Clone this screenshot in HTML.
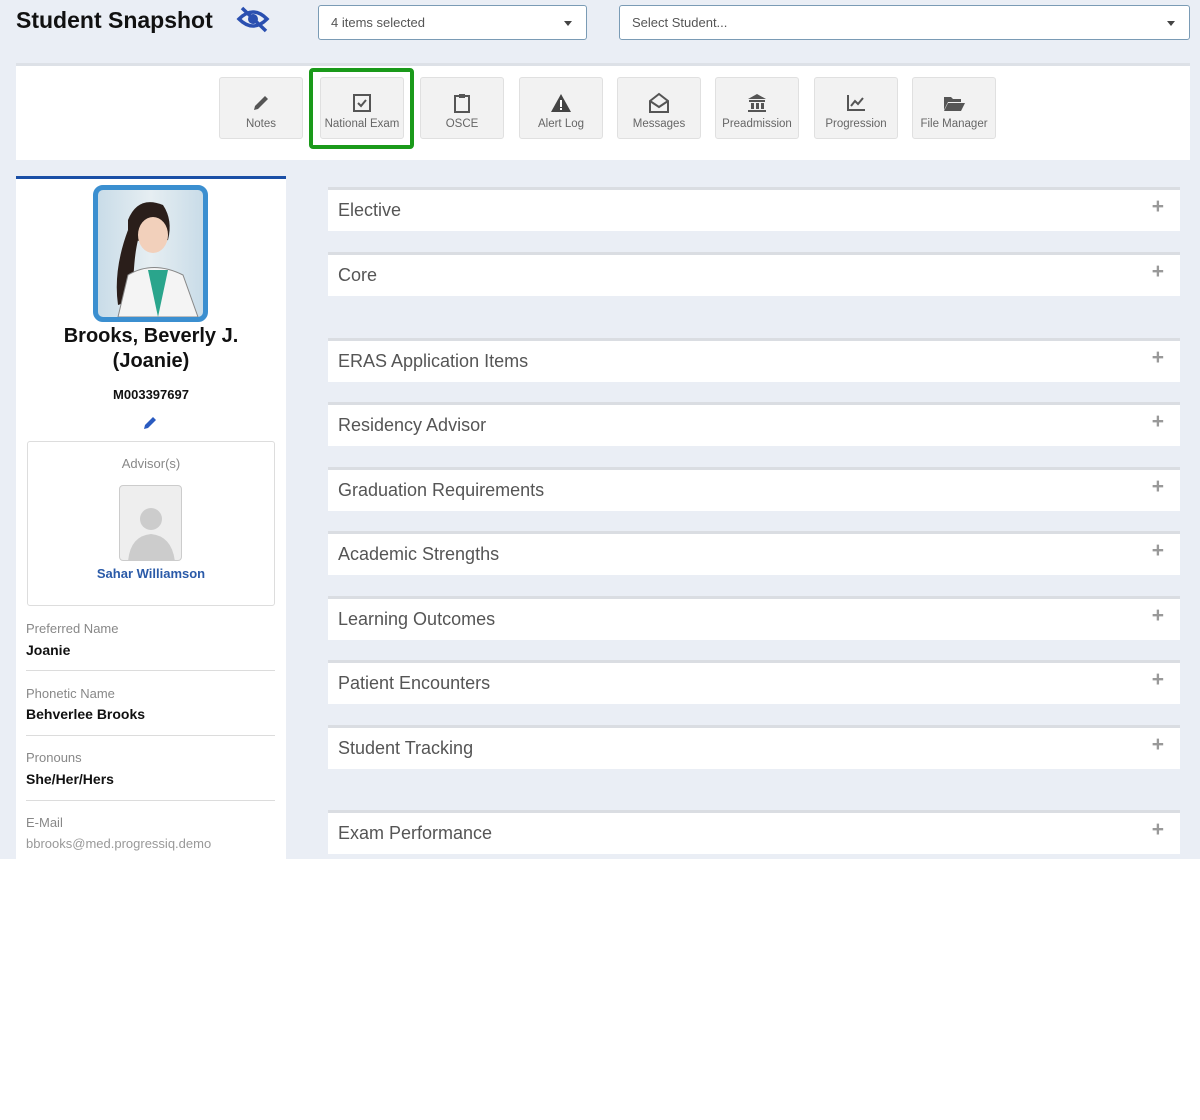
<!DOCTYPE html>
<html><head><style>
*{box-sizing:border-box;margin:0;padding:0}
body{width:1200px;height:1120px;background:#fff;font-family:"Liberation Sans",sans-serif;position:relative;overflow:hidden}
.bg{position:absolute;left:0;top:0;width:1200px;height:859px;background:#eaeef5}
.abs{position:absolute}
h1{position:absolute;left:16px;top:7px;font-size:23px;font-weight:bold;color:#111}
.sel{position:absolute;top:5px;height:35px;background:#fff;border:1px solid #7a9bb5;border-radius:3px;font-size:13px;color:#555;padding:9px 12px}
.sel:after{content:"";position:absolute;right:14px;top:15px;border:4px solid transparent;border-top:5px solid #444}
.bar{position:absolute;left:16px;top:63px;width:1174px;height:97px;background:#fff;border-top:3px solid #dde1e7}
.btn{position:absolute;top:77px;width:84px;height:62px;background:#f2f2f2;border:1px solid #e0e0e0;border-radius:3px;font-size:11.5px;color:#666;text-align:center}
.btn svg{position:absolute;left:50%;top:14px;margin-left:-11px}
.btn span{position:absolute;left:0;right:0;top:40px}
.green{position:absolute;left:309px;top:68px;width:105px;height:81px;border:4px solid #1a9a1a;border-radius:4px}
.card{position:absolute;left:16px;top:176px;width:270px;height:683px;background:#fff;border-top:3px solid #1a4fa6}
.acc{position:absolute;left:328px;width:852px;height:44px;background:#fff;border-top:3px solid #dadde2;font-size:18px;color:#555;padding:10px 10px}
.acc:after{content:"+";position:absolute;right:16px;top:5px;font-size:21px;font-weight:bold;color:#999}
.lbl{position:absolute;left:26px;font-size:13px;color:#888}
.val{position:absolute;left:26px;font-size:14px;font-weight:bold;color:#111}
.hr{position:absolute;left:26px;width:249px;height:1px;background:#dcdcdc}
</style></head><body>
<div class="bg"></div>
<h1>Student Snapshot</h1>
<svg class="abs" style="left:236px;top:5px" width="34" height="28" viewBox="0 0 34 28"><path d="M3 14 Q17 0 31 14 Q17 28 3 14Z" fill="none" stroke="#2a4fb0" stroke-width="3.5"/><circle cx="17" cy="14" r="5" fill="#2a4fb0"/><line x1="6" y1="3" x2="30" y2="26" stroke="#2a4fb0" stroke-width="3.5"/></svg>
<div class="sel" style="left:318px;width:269px">4 items selected</div>
<div class="sel" style="left:619px;width:571px">Select Student...</div>
<div class="bar"></div>
<div class="btn" style="left:219px"><svg width="22" height="22" viewBox="0 0 22 22"><path d="M4 18 L5 14 L15 4 L18 7 L8 17Z" fill="#555"/></svg><span>Notes</span></div>
<div class="btn" style="left:320px"><svg width="22" height="22" viewBox="0 0 22 22"><rect x="3" y="3" width="16" height="16" fill="none" stroke="#555" stroke-width="2"/><path d="M7 11 L10 14 L15 8" fill="none" stroke="#555" stroke-width="2"/></svg><span>National Exam</span></div>
<div class="btn" style="left:420px"><svg width="22" height="22" viewBox="0 0 22 22"><rect x="4" y="4" width="14" height="16" fill="none" stroke="#555" stroke-width="2"/><rect x="8" y="2" width="6" height="4" fill="#555"/></svg><span>OSCE</span></div>
<div class="btn" style="left:519px"><svg width="22" height="22" viewBox="0 0 22 22"><path d="M11 2 L21 20 L1 20Z" fill="#444"/><rect x="10" y="8" width="2" height="7" fill="#fff"/><rect x="10" y="16" width="2" height="2" fill="#fff"/></svg><span>Alert Log</span></div>
<div class="btn" style="left:617px"><svg width="22" height="22" viewBox="0 0 22 22"><path d="M2 9 L11 2 L20 9 L20 20 L2 20Z M2 9 L11 15 L20 9" fill="none" stroke="#555" stroke-width="2"/></svg><span>Messages</span></div>
<div class="btn" style="left:715px"><svg width="22" height="22" viewBox="0 0 22 22"><path d="M2 7 L11 2 L20 7Z M3 8h16v2H3z M5 11h3v6H5z M10 11h3v6h-3z M15 11h3v6h-3z M2 18h18v2H2z" fill="#555"/></svg><span>Preadmission</span></div>
<div class="btn" style="left:814px"><svg width="22" height="22" viewBox="0 0 22 22"><path d="M3 3 V18 H20" fill="none" stroke="#555" stroke-width="2"/><path d="M6 14 L10 9 L13 12 L18 6" fill="none" stroke="#555" stroke-width="2"/></svg><span>Progression</span></div>
<div class="btn" style="left:912px"><svg width="22" height="22" viewBox="0 0 22 22"><path d="M1 5 h7 l2 2 h8 v3 H5 L1 18Z M5 11 H22 L18 19 H1Z" fill="#555"/></svg><span>File Manager</span></div>
<div class="green"></div>

<div class="card"></div>
<div class="abs" style="left:93px;top:185px;width:115px;height:137px;border:5px solid #3b8fd0;border-radius:10px;background:linear-gradient(90deg,#c9dce8,#e6eef2,#c9dce8);overflow:hidden">
<svg width="105" height="127" viewBox="0 0 105 127"><path d="M30 30 Q40 5 65 15 Q75 30 70 50 Q40 60 30 40Z" fill="#2a1e1a"/><ellipse cx="55" cy="45" rx="15" ry="18" fill="#f2d0bb"/><path d="M30 40 Q15 80 20 115 L35 110 Q35 70 40 50Z" fill="#2a1e1a"/><path d="M20 127 L30 85 Q55 70 85 85 L100 127Z" fill="#f4f4f4" stroke="#888"/><path d="M50 80 L60 127 L70 80Z" fill="#2aa58c"/></svg></div>
<div class="abs" style="left:16px;width:270px;top:324px;text-align:center;font-size:20px;font-weight:bold;color:#111;line-height:25px">Brooks, Beverly J.<br>(Joanie)</div>
<div class="abs" style="left:16px;width:270px;top:387px;text-align:center;font-size:13px;font-weight:bold;color:#111">M003397697</div>
<svg class="abs" style="left:142px;top:415px" width="16" height="16" viewBox="0 0 16 16"><path d="M2 14 L3 10 L11 2 L14 5 L6 13Z" fill="#2a5bc0"/></svg>
<div class="abs" style="left:27px;top:441px;width:248px;height:165px;border:1px solid #ddd;border-radius:3px"></div>
<div class="abs" style="left:27px;width:248px;top:456px;text-align:center;font-size:13px;color:#888">Advisor(s)</div>
<div class="abs" style="left:119px;top:485px;width:63px;height:76px;border:1px solid #ccc;border-radius:4px;background:#eee;overflow:hidden"><svg width="63" height="76"><circle cx="31" cy="33" r="11" fill="#ccc"/><path d="M8 76 Q10 50 31 48 Q52 50 55 76Z" fill="#ccc"/></svg></div>
<div class="abs" style="left:27px;width:248px;top:566px;text-align:center;font-size:13px;font-weight:bold;color:#2a5aa8">Sahar Williamson</div>
<div class="lbl" style="top:621px">Preferred Name</div><div class="val" style="top:642px">Joanie</div><div class="hr" style="top:670px"></div>
<div class="lbl" style="top:686px">Phonetic Name</div><div class="val" style="top:706px">Behverlee Brooks</div><div class="hr" style="top:735px"></div>
<div class="lbl" style="top:750px">Pronouns</div><div class="val" style="top:771px">She/Her/Hers</div><div class="hr" style="top:800px"></div>
<div class="lbl" style="top:815px">E-Mail</div><div class="lbl" style="top:836px;color:#999">bbrooks@med.progressiq.demo</div>

<div class="acc" style="top:187px">Elective</div>
<div class="acc" style="top:252px">Core</div>
<div class="acc" style="top:338px">ERAS Application Items</div>
<div class="acc" style="top:402px">Residency Advisor</div>
<div class="acc" style="top:467px">Graduation Requirements</div>
<div class="acc" style="top:531px">Academic Strengths</div>
<div class="acc" style="top:596px">Learning Outcomes</div>
<div class="acc" style="top:660px">Patient Encounters</div>
<div class="acc" style="top:725px">Student Tracking</div>
<div class="acc" style="top:810px">Exam Performance</div>
</body></html>
